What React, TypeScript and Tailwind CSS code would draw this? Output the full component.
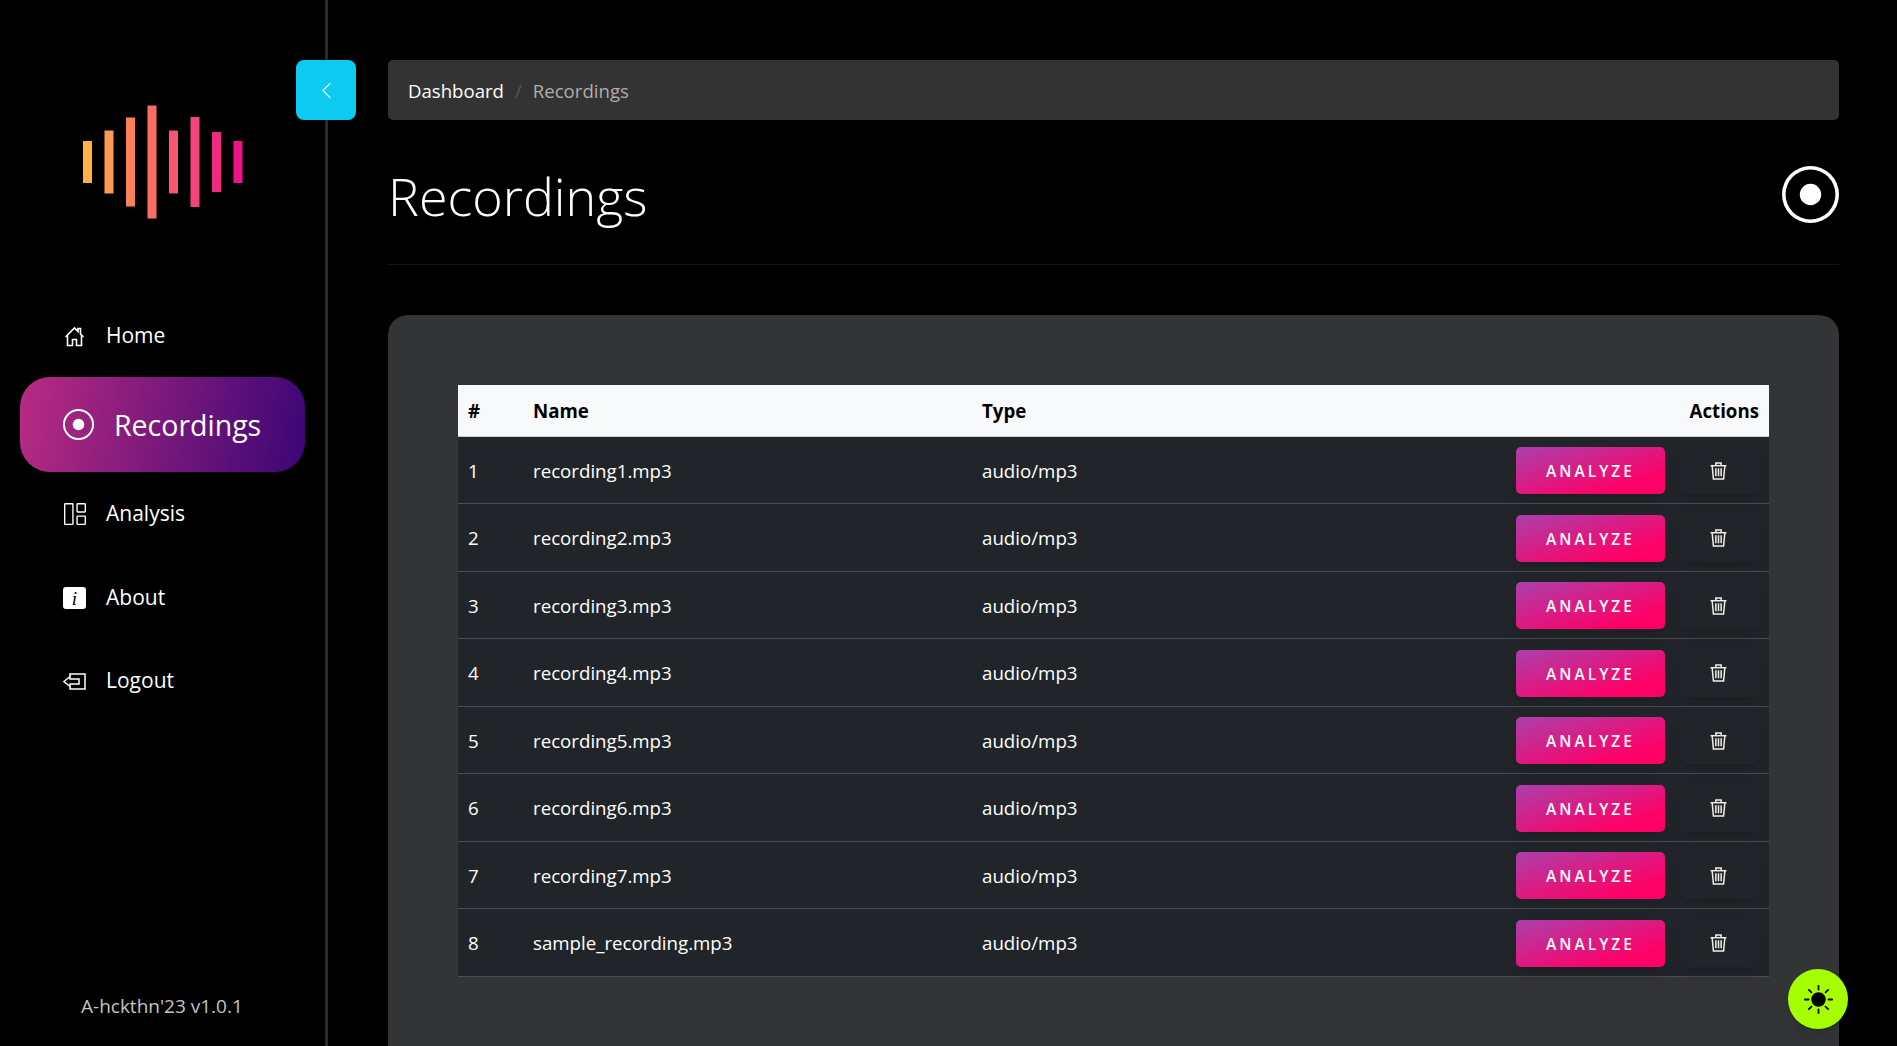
import React from "react";
import {
  BsBrightnessHighFill,
  BsChevronLeft,
  BsGrid1X2,
  BsRecordCircle,
} from "react-icons/bs";

const files = [
  "recording1.mp3",
  "recording2.mp3",
  "recording3.mp3",
  "recording4.mp3",
  "recording5.mp3",
  "recording6.mp3",
  "recording7.mp3",
  "sample_recording.mp3",
];

// logo bars: height and colour, left to right
const bars = [
  { h: 42, color: "#ffb04a" },
  { h: 63, color: "#fb9a52" },
  { h: 89, color: "#fb8058" },
  { h: 113, color: "#f96d66" },
  { h: 63, color: "#f6566f" },
  { h: 90, color: "#f3437b" },
  { h: 60, color: "#f12a80" },
  { h: 42, color: "#ee1288" },
];

const Logo = () => (
  <svg width="160" height="114" viewBox="0 0 160 114">
    {bars.map((b, i) => (
      <rect key={i} x={i * 21.5} y={57 - b.h / 2} width="9" height={b.h} fill={b.color} />
    ))}
  </svg>
);

const HomeIcon = () => (
  <svg width="21" height="21" viewBox="0 0 21 21" fill="none" stroke="currentColor" strokeWidth="1.6">
    <path d="M1.5 11 L10.5 2 L14 5.5 V2.5 H16.5 V8 L19.5 11" />
    <path d="M3.5 9 V19.5 H8.5 V13.5 H12.5 V19.5 H17.5 V9" />
  </svg>
);

const LogoutIcon = () => (
  <svg width="23" height="17" viewBox="0 0 23 17" fill="none" stroke="currentColor" strokeWidth="1.5">
    <path d="M7 3 V1 H22 V16 H7 V14" />
    <path d="M1 8.5 L7 3.5 V6 H16 V11 H7 V13.5 Z" />
  </svg>
);

const InfoIcon = () => (
  <span className="w-[23px] h-[22px] rounded-[3px] bg-white flex items-center justify-center text-black text-[19px] italic font-['Liberation_Serif',serif] leading-none">
    i
  </span>
);

const TrashIcon = () => (
  <svg width="17" height="18" viewBox="0 0 16 17" fill="none" stroke="currentColor" strokeWidth="1.4">
    <path d="M5.5 3 V1 H10.5 V3" />
    <path d="M0.5 3.5 H15.5" />
    <path d="M2 3.5 L3.2 16 H12.8 L14 3.5" />
    <path d="M5.5 6 V13.5 M8 6 V13.5 M10.5 6 V13.5" />
  </svg>
);

const NavItem = ({ icon, label }: { icon: React.ReactNode; label: string }) => (
  <a className="flex items-center h-[40px] pl-[63px] text-white text-[21px]">
    <span className="w-[23px] flex justify-center">{icon}</span>
    <span className="ml-[20px]">{label}</span>
  </a>
);

const Sidebar = () => (
  <aside className="w-[328px] h-full shrink-0 border-r-[3px] border-[#2b2b2b] flex flex-col">
    <div className="pl-[83px] pt-[105px]">
      <Logo />
    </div>
    <nav className="flex flex-col mt-[97px]">
      <NavItem icon={<HomeIcon />} label="Home" />
      <a className="flex items-center h-[95px] mt-[21px] ml-[20px] w-[285px] pl-[43px] rounded-[30px] bg-[linear-gradient(100deg,#b92b82,#3a0675)] text-white text-[28.5px]">
        <BsRecordCircle size={31} />
        <span className="ml-[20px] pt-[1px]">Recordings</span>
      </a>
      <div className="mt-[22px]">
        <NavItem icon={<BsGrid1X2 size={22} />} label="Analysis" />
      </div>
      <div className="mt-[44px]">
        <NavItem icon={<InfoIcon />} label="About" />
      </div>
      <div className="mt-[43px]">
        <NavItem icon={<LogoutIcon />} label="Logout" />
      </div>
    </nav>
    <p className="mt-auto mb-[26px] pl-[81px] text-[19px] text-[#c4c4c4]">A-hckthn'23 v1.0.1</p>
  </aside>
);

const Row = ({ index, name }: { index: number; name: string }) => (
  <tr className="h-[67.5px] bg-[#212529] border-b border-[#4a4d50] text-white text-[18.7px]">
    <td className="pl-[10px] pt-[2px]">{index}</td>
    <td className="pl-[11px] pt-[2px]">{name}</td>
    <td className="pl-[11px] pt-[2px]">audio/mp3</td>
    <td className="pr-[10px] pt-[2px]">
      <div className="flex justify-end gap-[16px]">
        <button className="w-[149px] h-[47px] pt-[2px] rounded-[5px] bg-linear-to-br/srgb from-[#aa40ab] to-[#ff0066] to-80% text-white text-[15.5px] font-semibold tracking-[3px] shadow-lg">
          ANALYZE
        </button>
        <button className="w-[78px] h-[47px] pr-[4px] rounded-[5px] bg-[#212529] shadow-lg flex items-center justify-center text-[#f0f0e8]">
          <TrashIcon />
        </button>
      </div>
    </td>
  </tr>
);

export default function App() {
  return (
    <div className="relative w-full h-[1046px] overflow-hidden bg-black flex font-['Open_Sans',sans-serif]">
      <Sidebar />
      <button className="absolute left-[296px] top-[60px] w-[60px] h-[60px] rounded-[8px] bg-[#0dcaf0] flex items-center justify-center text-white">
        <BsChevronLeft size={19} />
      </button>

      <main className="flex-1 min-w-0 pl-[60px] pr-[58px] pt-[60px]">
        <div className="h-[60px] rounded-[5px] bg-[#333333] flex items-center pl-[20px] pt-[2px] text-[18.6px]">
          <span className="text-white">Dashboard</span>
          <span className="text-[#555555] mx-[11px]">/</span>
          <span className="text-[#adadad]">Recordings</span>
        </div>

        <div className="flex items-center justify-between h-[145px] pt-[5px] border-b border-[#151515]">
          <h1 className="text-white text-[52px] font-light pt-[3px]">Recordings</h1>
          <BsRecordCircle size={57} className="text-white" />
        </div>

        <section className="mt-[50px] h-[800px] rounded-[20px] bg-[#333436] pt-[70px] px-[70px]">
          <table className="w-full border-collapse">
            <thead>
              <tr className="h-[51px] bg-[#f8f9fa] border-b border-[#c9cacb] text-black text-[18.7px] font-bold text-left">
                <th className="pl-[10px] pt-[1px] w-[64px]">#</th>
                <th className="pl-[11px] pt-[1px] w-[449px]">Name</th>
                <th className="pl-[11px] pt-[1px]">Type</th>
                <th className="pr-[10px] pt-[1px] text-right">Actions</th>
              </tr>
            </thead>
            <tbody>
              {files.map((f, i) => (
                <Row key={f} index={i + 1} name={f} />
              ))}
            </tbody>
          </table>
        </section>
      </main>

      <button className="absolute left-[1788px] top-[969px] w-[60px] h-[60px] rounded-full bg-[#a6ff00] flex items-center justify-center text-black shadow-lg">
        <BsBrightnessHighFill size={29} />
      </button>
    </div>
  );
}
